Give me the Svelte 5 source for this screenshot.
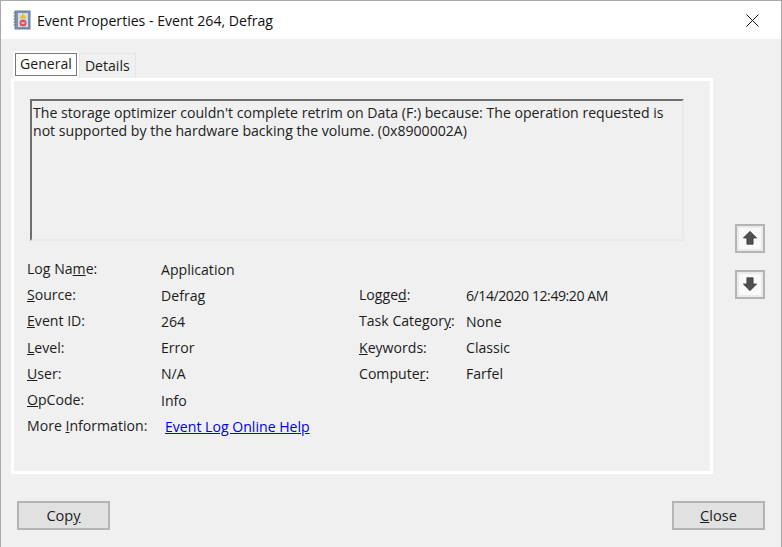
<script>
	const rows = [
		{ label: ['Log Na', 'm', 'e:'], value: 'Application' },
		{ label: ['', 'S', 'ource:'], value: 'Defrag', label2: ['Logge', 'd', ':'], value2: '6/14/2020 12:49:20 AM', tight: true },
		{ label: ['', 'E', 'vent ID:'], value: '264', label2: ['Task Categor', 'y', ':'], value2: 'None' },
		{ label: ['', 'L', 'evel:'], value: 'Error', label2: ['', 'K', 'eywords:'], value2: 'Classic' },
		{ label: ['', 'U', 'ser:'], value: 'N/A', label2: ['Compute', 'r', ':'], value2: 'Farfel' },
		{ label: ['', 'O', 'pCode:'], value: 'Info' }
	];
</script>

<div class="window">
	<div class="titlebar">
		<svg class="appicon" width="18" height="20" viewBox="0 0 18 20">
			<rect x="2" y="1" width="15" height="18" fill="#7d93b5" stroke="#6a7c99" />
			<rect x="5" y="3" width="10" height="14" fill="#d3dbe8" />
			<path d="M0.5 3h3M0.5 6h3M0.5 9h3M0.5 12h3M0.5 15h3" stroke="#777" />
			<path d="M10 3l3.5 5.5h-7z" fill="#eac02e" />
			<circle cx="10" cy="13" r="3.5" fill="#dd5560" />
			<rect x="8.5" y="12.4" width="3" height="1.2" fill="#fff" />
		</svg>
		<span class="title">Event Properties - Event 264, Defrag</span>
		<svg class="close" width="13" height="13" viewBox="0 0 13 13">
			<path d="M0.5 0.5l12 12M12.5 0.5l-12 12" stroke="#111" fill="none" />
		</svg>
	</div>

	<div class="content">
		<div class="tabs">
			<div class="tab active"><span class="focus">General</span></div>
			<div class="tab">Details</div>
		</div>

		<div class="middle">
			<div class="panel">
				<div class="message">The storage optimizer couldn't complete retrim on Data (F:) because: The operation requested is not supported by the hardware backing the volume. (0x8900002A)</div>

				<div class="details">
					{#each rows as row}
						<div class="label">{row.label[0]}<u>{row.label[1]}</u>{row.label[2]}</div>
						<div class="value">{row.value}</div>
						<div class="label">
							{#if row.label2}{row.label2[0]}<u>{row.label2[1]}</u>{row.label2[2]}{/if}
						</div>
						<div class="value" class:tight={row.tight}>{row.value2 ?? ''}</div>
					{/each}
					<div class="label">More <u>I</u>nformation:</div>
					<div class="value wide"><a href="#help">Event Log Online Help</a></div>
				</div>
			</div>

			<div class="side">
				<button class="arrow" aria-label="Previous">
					<svg width="16" height="16" viewBox="0 0 18 18">
						<path d="M9 1.5L16.5 9H12.5V16H5.5V9H1.5Z" fill="#505050" stroke="#333" stroke-width="0.8" />
					</svg>
				</button>
				<button class="arrow" aria-label="Next">
					<svg width="16" height="16" viewBox="0 0 18 18">
						<path d="M9 16.5L16.5 9H12.5V2H5.5V9H1.5Z" fill="#505050" stroke="#333" stroke-width="0.8" />
					</svg>
				</button>
			</div>
		</div>

		<div class="footer">
			<button class="btn">Cop<u>y</u></button>
			<button class="btn"><u>C</u>lose</button>
		</div>
	</div>
</div>

<style>
	:global(body) {
		margin: 0;
		background: #f0f0f0;
	}

	.window {
		width: 782px;
		height: 547px;
		box-sizing: border-box;
		border: 1px solid #a9a9a9;
		border-bottom: 0;
		display: flex;
		flex-direction: column;
		font-family: "Open Sans", "Noto Sans", sans-serif;
		font-size: 14.1px;
		color: #1c1c1c;
		overflow: hidden;
	}

	.titlebar {
		height: 38px;
		background: #fff;
		display: flex;
		align-items: center;
		padding: 0 22px 0 12px;
		flex-shrink: 0;
	}

	.appicon {
		margin-right: 6px;
	}

	.title {
		flex: 1;
		color: #111;
	}

	.content {
		flex: 1;
		background: #f0f0f0;
		padding: 12px 16px 0 10px;
		display: flex;
		flex-direction: column;
	}

	.tabs {
		display: flex;
		align-items: flex-end;
		height: 27px;
		padding-left: 2px;
		position: relative;
		z-index: 1;
	}

	.tab {
		height: 25px;
		box-sizing: border-box;
		padding: 2px 5px 0;
		border: 1px solid #e6e6e6;
		border-bottom: 0;
		background: #f0f0f0;
	}

	.tab.active {
		height: 27px;
		border: 2px solid #fff;
		border-bottom: 0;
		padding: 0;
		background: #fff;
	}

	.focus {
		display: block;
		height: 23px;
		line-height: 20px;
		padding: 0 4px;
		box-sizing: border-box;
		border: 1px solid #777;
		background: #fff;
	}

	.middle {
		display: flex;
		height: 396px;
	}

	.panel {
		width: 703px;
		box-sizing: border-box;
		border: 3px solid #fff;
		padding: 18px 26px 0 16px;
		display: flex;
		flex-direction: column;
		background: #f0f0f0;
	}

	.message {
		height: 142px;
		box-sizing: border-box;
		border: 2px solid #e9e9e9;
		border-top-color: #6e6e6e;
		border-left-color: #6e6e6e;
		padding: 3px 1px;
		line-height: 18px;
		color: #222;
	}

	.details {
		display: grid;
		grid-template-columns: 134px 198px 107px 1fr;
		grid-auto-rows: 26.2px;
		margin-top: 16px;
		margin-left: -3px;
		align-items: center;
	}

	.label {
		padding-bottom: 3px;
	}

	.value {
		padding-bottom: 2px;
	}

	.tight {
		letter-spacing: -0.45px;
	}

	.wide {
		grid-column: 2 / 5;
		padding-left: 4px;
	}

	a {
		color: #0000ee;
	}

	.side {
		width: 52px;
		padding: 146px 0 0 22px;
		box-sizing: border-box;
		display: flex;
		flex-direction: column;
		gap: 17px;
	}

	button {
		font: inherit;
		color: inherit;
		padding: 0;
	}

	.arrow {
		width: 30px;
		height: 29px;
		border: 2px solid #b4b4b4;
		background: #f9f9f9;
		box-shadow: inset 0 0 0 2px #eaeaea;
		display: flex;
		align-items: center;
		justify-content: center;
		padding-bottom: 2px;
	}

	.footer {
		display: flex;
		justify-content: space-between;
		margin-top: 27px;
		padding-left: 6px;
	}

	.btn {
		width: 93px;
		height: 29px;
		border: 2px solid #b4b4b4;
		background: #e1e1e1;
		font-size: 14.6px;
		line-height: 22px;
		padding-bottom: 2px;
	}
</style>
